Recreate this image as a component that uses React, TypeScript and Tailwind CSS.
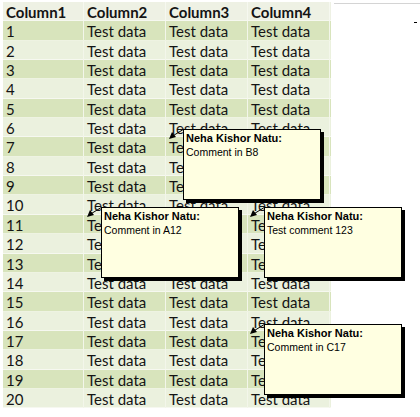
import React from "react";

const headers = ["Column1", "Column2", "Column3", "Column4"];
const rows = Array.from({ length: 20 }, (_, i) => i + 1);

interface IComment {
  left: number;
  top: number;
  text: string;
}

const comments: IComment[] = [
  { left: 183, top: 129, text: "Comment in B8" },
  { left: 101, top: 207, text: "Comment in A12" },
  { left: 264, top: 207, text: "Test comment 123" },
  { left: 264, top: 324, text: "Comment in C17" },
];

const CommentBox: React.FC<{ comment: IComment }> = ({ comment }) => {
  const { left, top, text } = comment;
  return (
    <div className="absolute" style={{ left: left - 16, top: top - 2 }}>
      {/* arrow from box corner to the cell */}
      <svg width="20" height="14" className="absolute left-0 top-0">
        <line x1="17" y1="2" x2="4" y2="10" stroke="black" strokeWidth="1" />
        <polygon points="2,12 5,5 9,10" fill="black" />
      </svg>
      <div className="absolute left-[16px] top-[2px] w-[138px] h-[71px] bg-[#ffffe1] border border-black shadow-[3px_3px_0_0_#000] px-[2px] pt-[1px] font-['Liberation_Sans',sans-serif] text-black leading-[14px]">
        <div className="text-[11px] font-bold">Neha Kishor Natu:</div>
        <div className="text-[10.5px]">{text}</div>
      </div>
    </div>
  );
};

const App: React.FC = () => {
  return (
    <div className="relative w-[420px] h-[417px] bg-white overflow-hidden">
      <div className="absolute left-[334px] right-0 top-[3px] h-px bg-[#d4d4d4]" />
      <div className="absolute right-[3px] top-[22px] w-[3px] h-px bg-black" />
      <div className="ml-[3px] pt-[2px] w-[328px] font-['Lato',sans-serif] text-[15px] text-[#141414]">
        <div className="grid grid-cols-[81px_82px_82px_82px] h-[19.4px] bg-[#eef1e4] border-b border-[#f6f8f0]">
          {headers.map((h) => (
            <div
              key={h}
              className="pl-[3px] pt-[2px] font-bold leading-[17px] border-r border-[#f6f8f0]"
            >
              {h}
            </div>
          ))}
        </div>
        {rows.map((n) => (
          <div
            key={n}
            className={
              n % 2 === 1
                ? "grid grid-cols-[81px_82px_82px_82px] h-[19.35px] bg-[#d8e4bc] border-b border-[#eef3e2]"
                : "grid grid-cols-[81px_82px_82px_82px] h-[19.35px] bg-[#ebf1de] border-b border-[#f6f8f0]"
            }
          >
            <div className="pl-[3px] pt-[2px] leading-[17px] border-r border-[#f3f6ea]">
              {n}
            </div>
            {[0, 1, 2].map((c) => (
              <div
                key={c}
                className="pl-[3px] pt-[2px] leading-[17px] border-r border-[#f3f6ea]"
              >
                Test data
              </div>
            ))}
          </div>
        ))}
      </div>
      {comments.map((c) => (
        <CommentBox key={c.text} comment={c} />
      ))}
    </div>
  );
};

export default App;
